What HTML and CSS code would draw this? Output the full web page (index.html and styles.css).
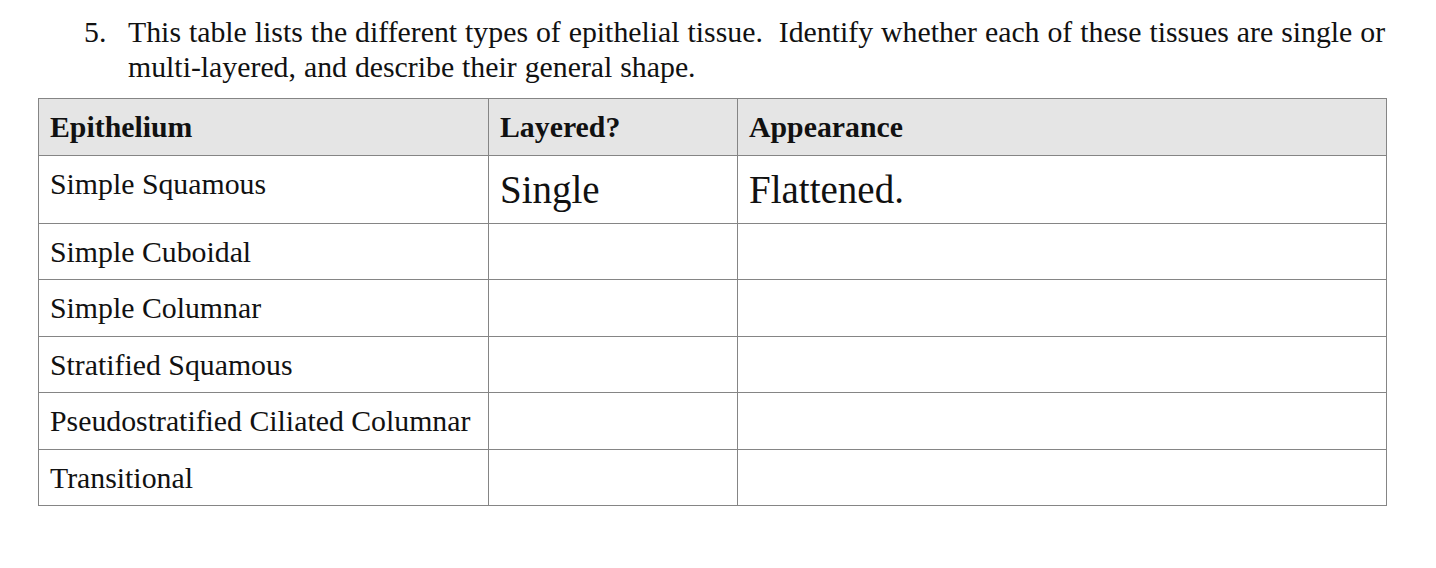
FILE: index.html
```html
<!DOCTYPE html>
<html>
<head>
<meta charset="utf-8">
<link rel="stylesheet" href="styles.css">
</head>
<body>
<div class="question">
  <span class="num">5.</span>
  <p class="prompt">This table lists the different types of epithelial tissue.&nbsp; Identify whether each of these tissues are single or multi-layered, and describe their general shape.</p>
</div>
<table class="grid">
  <colgroup>
    <col class="c1"><col class="c2"><col class="c3">
  </colgroup>
  <thead>
    <tr><th>Epithelium</th><th>Layered?</th><th>Appearance</th></tr>
  </thead>
  <tbody>
    <tr><td>Simple Squamous</td><td class="answer">Single</td><td class="answer">Flattened.</td></tr>
    <tr><td>Simple Cuboidal</td><td></td><td></td></tr>
    <tr><td>Simple Columnar</td><td></td><td></td></tr>
    <tr><td>Stratified Squamous</td><td></td><td></td></tr>
    <tr><td>Pseudostratified Ciliated Columnar</td><td></td><td></td></tr>
    <tr><td>Transitional</td><td></td><td></td></tr>
  </tbody>
</table>
</body>
</html>
```
FILE: styles.css
```css
html, body {
  margin: 0;
  padding: 0;
  background: #ffffff;
}
body {
  font-family: "Liberation Serif", "Times New Roman", serif;
  color: #111111;
  font-size: 29.8px;
}
.question {
  display: flex;
  padding: 14px 0 0 84px;
}
.num {
  width: 44px;
  flex: none;
  line-height: 35px;
}
.prompt {
  margin: 0;
  width: 1275px;
  line-height: 35px;
  word-spacing: 0.5px;
}
.grid {
  margin: 14px 0 0 38px;
  border-collapse: collapse;
  table-layout: fixed;
  width: 1348px;
}
.c1 { width: 450px; }
.c2 { width: 249px; }
.c3 { width: 649px; }
.grid th, .grid td {
  border: 1px solid #858585;
  padding: 11px;
  text-align: left;
  vertical-align: top;
  font-size: 29.8px;
}
.grid th {
  background: #e5e5e5;
  font-weight: bold;
  line-height: 34px;
}
.grid td {
  line-height: 33.4px;
}
.grid td.answer {
  font-size: 39px;
  line-height: 45px;
}
```
